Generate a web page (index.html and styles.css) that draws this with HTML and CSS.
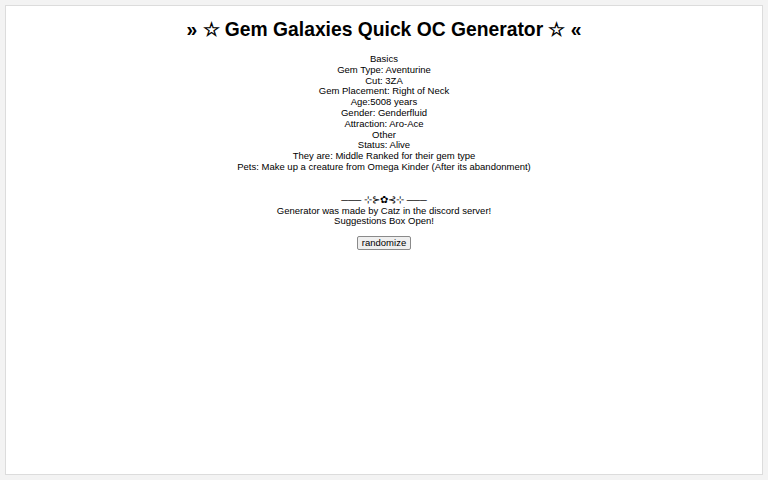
FILE: index.html
```html
<!DOCTYPE html>
<html>
<head>
<meta charset="utf-8">
<link rel="stylesheet" href="styles.css">
</head>
<body>
<div class="card">
  <h1 class="title">» ☆ Gem Galaxies Quick OC Generator ☆ «</h1>
  <div class="info">
    <div>Basics</div>
    <div>Gem Type: Aventurine</div>
    <div>Cut: 3ZA</div>
    <div>Gem Placement: Right of Neck</div>
    <div>Age:5008 years</div>
    <div>Gender: Genderfluid</div>
    <div>Attraction: Aro-Ace</div>
    <div>Other</div>
    <div>Status: Alive</div>
    <div>They are: Middle Ranked for their gem type</div>
    <div>Pets: Make up a creature from Omega Kinder (After its abandonment)</div>
  </div>
  <div class="footer">
    <div>─── ⊹⊱✿⊰⊹ ───</div>
    <div>Generator was made by Catz in the discord server!</div>
    <div>Suggestions Box Open!</div>
  </div>
  <div class="actions"><button class="btn">randomize</button></div>
</div>
</body>
</html>
```
FILE: styles.css
```css
html, body {
  margin: 0;
  padding: 0;
}
body {
  background: #f3f3f3;
  font-family: "Liberation Sans", Arial, sans-serif;
  color: #000;
  padding: 5px;
  height: 480px;
  box-sizing: border-box;
}
.card {
  background: #fff;
  border: 1px solid #dcdcdc;
  height: 100%;
  box-sizing: border-box;
  text-align: center;
}
.title {
  font-size: 19.3px;
  font-weight: bold;
  margin: 0;
  padding-top: 12px;
  line-height: 23px;
}
.info {
  margin-top: 13px;
  font-size: 9.5px;
  line-height: 10.8px;
}
.footer {
  margin-top: 22px;
  font-size: 9.5px;
  line-height: 10.8px;
}
.actions {
  margin-top: 5px;
}
.btn {
  font-family: "Liberation Sans", Arial, sans-serif;
  font-size: 9.5px;
  padding: 0 4px;
  border: 1px solid #8a8a8a;
  border-radius: 2px;
  background: #efefef;
  color: #000;
  height: 14px;
  line-height: 12px;
}
```
